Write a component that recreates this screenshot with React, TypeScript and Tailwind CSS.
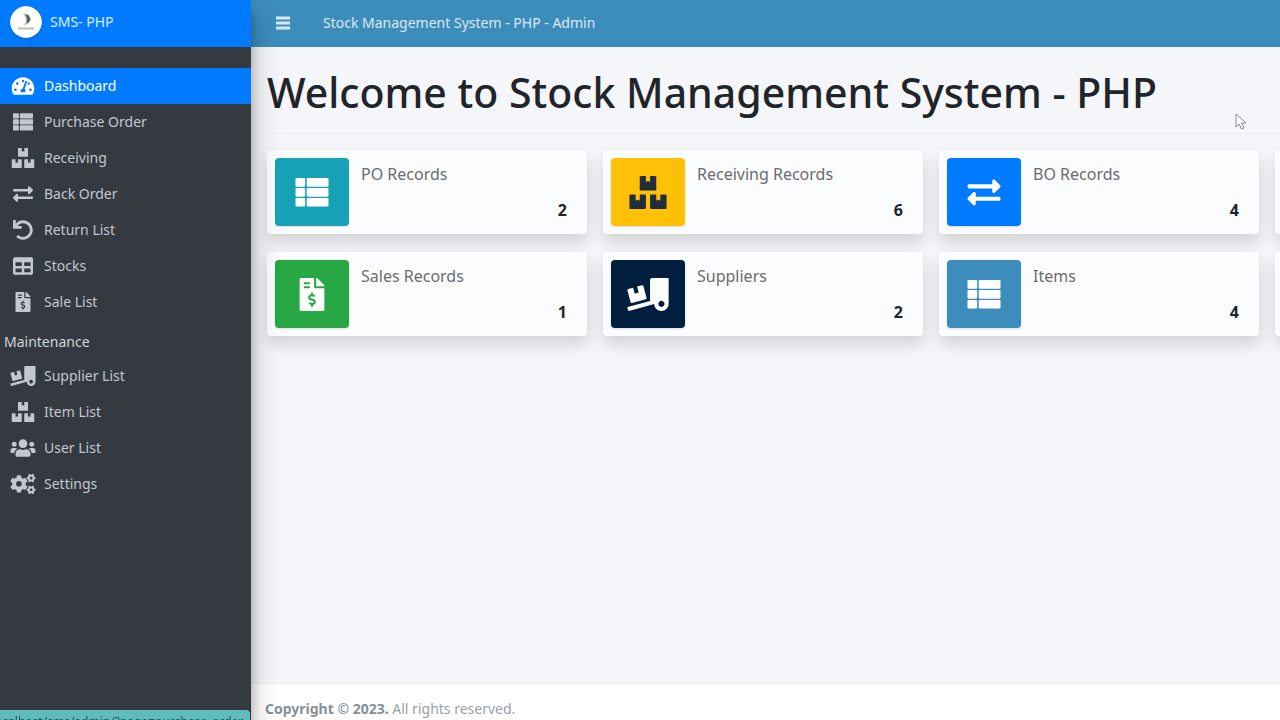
import type { ReactNode, SVGProps } from 'react';
import {
    FaBoxes,
    FaCogs,
    FaExchangeAlt,
    FaFileInvoiceDollar,
    FaTable,
    FaTachometerAlt,
    FaTruckLoading,
    FaUndo,
    FaUsers,
} from 'react-icons/fa';

type Icon = (props: SVGProps<SVGSVGElement>) => ReactNode;
type NavItem = { label: string; icon: Icon; active?: boolean };
type Stat = { label: string; value: number; icon: Icon; color: string };

// Tighter than the Font Awesome list, with almost square cells
function ListIcon(props: SVGProps<SVGSVGElement>) {
    return (
        <svg viewBox="0 0 512 512" fill="currentColor" aria-hidden="true" {...props}>
            {[32, 186, 340].map((y) => (
                <g key={y}>
                    <rect x="0" y={y} width="150" height="134" rx="16" />
                    <rect x="174" y={y} width="338" height="134" rx="16" />
                </g>
            ))}
        </svg>
    );
}

function MenuIcon(props: SVGProps<SVGSVGElement>) {
    return (
        <svg viewBox="0 0 16 16" fill="currentColor" aria-hidden="true" {...props}>
            <path d="M1 1.500h14v3H1zM1 6.500h14v3H1zM1 11.500h14v3H1z" />
        </svg>
    );
}

const mainNav: NavItem[] = [
    { label: 'Dashboard', icon: FaTachometerAlt, active: true },
    { label: 'Purchase Order', icon: ListIcon },
    { label: 'Receiving', icon: FaBoxes },
    { label: 'Back Order', icon: FaExchangeAlt },
    { label: 'Return List', icon: FaUndo },
    { label: 'Stocks', icon: FaTable },
    { label: 'Sale List', icon: FaFileInvoiceDollar },
];

const maintenanceNav: NavItem[] = [
    { label: 'Supplier List', icon: FaTruckLoading },
    { label: 'Item List', icon: FaBoxes },
    { label: 'User List', icon: FaUsers },
    { label: 'Settings', icon: FaCogs },
];

const statRows: Stat[][] = [
    [
        { label: 'PO Records', value: 2, icon: ListIcon, color: 'bg-[#17a2b8] text-white' },
        { label: 'Receiving Records', value: 6, icon: FaBoxes, color: 'bg-[#ffc107] text-[#1f2d3d]' },
        { label: 'BO Records', value: 4, icon: FaExchangeAlt, color: 'bg-[#007bff] text-white' },
    ],
    [
        { label: 'Sales Records', value: 1, icon: FaFileInvoiceDollar, color: 'bg-[#28a745] text-white' },
        { label: 'Suppliers', value: 2, icon: FaTruckLoading, color: 'bg-[#001f3f] text-white' },
        { label: 'Items', value: 4, icon: ListIcon, color: 'bg-[#3c8dbc] text-white' },
    ],
];

function NavList({ items }: { items: NavItem[] }) {
    return (
        <ul>
            {items.map(({ label, icon: Icon, active }) => (
                <li key={label}>
                    <a
                        href="#"
                        className={`flex h-9 items-center gap-2 pl-2.5 ${active ? 'bg-[#007bff] text-white' : 'text-[#c2c7d0]'}`}
                    >
                        <Icon className="h-5 w-[26px]" />
                        {label}
                    </a>
                </li>
            ))}
        </ul>
    );
}

function Sidebar() {
    return (
        <aside className="z-10 w-[251px] shrink-0 bg-[#343a40] text-sm shadow-[0_14px_28px_rgba(0,0,0,0.25),0_10px_10px_rgba(0,0,0,0.22)]">
            <a href="#" className="flex h-[47px] items-center gap-2 bg-[#007bff] pb-1 pl-2.5 text-white/85">
                <svg viewBox="0 0 32 32" className="size-8 rounded-full shadow-md" aria-hidden="true">
                    <circle cx="16" cy="16" r="16" fill="#fdfdfd" />
                    <path d="M13 7l6 2.500 2 4-2 4-5 2.500 2-6z" fill="#c5d3cf" />
                    <path d="M15 7.500l4 2 1.500 4-2 3-2 1 .5-5z" fill="#55635f" />
                    <path d="M8 22.500h16" stroke="#b4c4b6" strokeWidth="2" />
                </svg>
                SMS- PHP
            </a>
            <nav className="pt-[21px]">
                <NavList items={mainNav} />
                <h2 className="pt-3 pb-1.5 pl-1 leading-5 text-[#d0d4db]">Maintenance</h2>
                <NavList items={maintenanceNav} />
            </nav>
        </aside>
    );
}

function StatCard({ label, value, icon: Icon, color }: Stat) {
    return (
        <div className="flex h-[84px] gap-3 rounded bg-[#fbfcfd] p-2 shadow-[0_8px_16px_rgba(0,0,0,0.15)]">
            <span className={`flex w-[74px] items-center justify-center rounded shadow-sm ${color}`}>
                <Icon className="h-[33px] w-[42px]" />
            </span>
            <div className="flex flex-1 flex-col justify-between py-1 pr-3 text-base leading-6">
                <span className="text-[#6a6d70]">{label}</span>
                <span className="text-right font-bold text-[#212529]">{value}</span>
            </div>
        </div>
    );
}

export default function App() {
    return (
        <div className="flex min-h-screen overflow-hidden bg-[#f4f6f9] font-['Noto_Sans','Open_Sans',sans-serif] text-[#212529]">
            <Sidebar />
            <div className="flex min-w-0 flex-1 flex-col">
                <header className="flex h-[47px] items-center gap-8 bg-[#3c8dbc] pb-0.5 pl-6 text-sm text-white/80">
                    <button type="button" aria-label="Toggle sidebar">
                        <MenuIcon className="size-4" />
                    </button>
                    <a href="#">Stock Management System - PHP - Admin</a>
                </header>

                <main className="flex-1 pt-5 pl-4">
                    <h1 className="text-[41px] leading-[50px] font-medium whitespace-nowrap">
                        Welcome to Stock Management System - PHP
                    </h1>
                    <hr className="my-4 border-black/3" />
                    <div className="flex flex-col gap-[18px]">
                        {statRows.map((row, i) => (
                            <div key={i} className="grid grid-cols-[repeat(4,320px)] gap-4">
                                {row.map((stat) => (
                                    <StatCard key={stat.label} {...stat} />
                                ))}
                                <div className="rounded bg-[#fbfcfd] shadow-[0_8px_16px_rgba(0,0,0,0.15)]" />
                            </div>
                        ))}
                    </div>
                </main>

                <footer className="border-t border-[#eceef1] bg-white pt-3.5 pl-3.5 text-sm leading-[22px] text-[#9a9fa5]">
                    <strong className="text-[#869099]">Copyright © 2023.</strong> All rights reserved.
                </footer>
            </div>

            {/* link preview in the corner of the window */}
            <div className="fixed bottom-0 left-0 z-20 h-2.5 w-[250px] overflow-hidden rounded-tr bg-[#5fbcbd]">
                <p className="-ml-2 pt-1 text-xs leading-4 whitespace-nowrap text-[#24585c]">
                    localhost/sms/admin/?page=purchase_order
                </p>
            </div>

            <svg viewBox="0 0 12 18" className="fixed top-[113px] left-[1235px] z-20 h-[18px] w-3" aria-hidden="true">
                <path d="M1 1v13l3-3 2.500 5 2.500-1-2.500-5h4.500z" fill="#fff" stroke="#8a8a90" />
            </svg>
        </div>
    );
}
